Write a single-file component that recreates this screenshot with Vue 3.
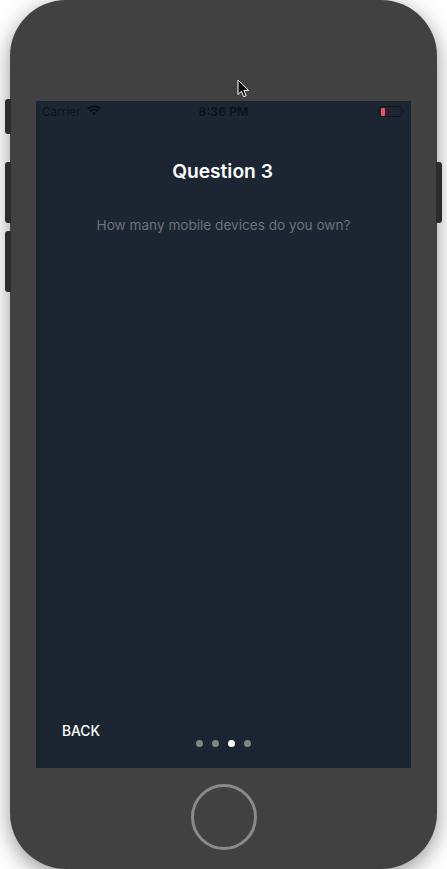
<script setup>
const dots = [false, false, true, false]
</script>

<template>
  <div class="stage">
    <div class="phone">
      <span class="side vol-mute"></span>
      <span class="side vol-up"></span>
      <span class="side vol-down"></span>
      <span class="side power"></span>

      <main class="screen">
        <header class="status">
          <div class="status-left">
            <span>Carrier</span>
            <svg class="wifi" viewBox="0 0 16 12" aria-hidden="true">
              <path d="M8 11.5 5.7 8.9a3.4 3.4 0 0 1 4.6 0Z" />
              <path d="M8 6a6 6 0 0 0-4.1 1.6L2.6 6.1A8 8 0 0 1 8 4a8 8 0 0 1 5.4 2.1l-1.3 1.5A6 6 0 0 0 8 6Z" />
              <path d="M8 2.2a9.9 9.9 0 0 0-6.7 2.6L0 3.3A11.8 11.8 0 0 1 8 .2a11.8 11.8 0 0 1 8 3.1l-1.3 1.5A9.9 9.9 0 0 0 8 2.2Z" />
            </svg>
          </div>
          <time class="clock">8:36 PM</time>
          <div class="battery">
            <span class="battery-body"><span class="battery-level"></span></span>
            <span class="battery-cap"></span>
          </div>
        </header>

        <section class="question">
          <h1>Question 3</h1>
          <p>How many mobile devices do you own?</p>
        </section>

        <footer class="footer">
          <button class="back">BACK</button>
          <div class="dots">
            <span v-for="(active, i) in dots" :key="i" class="dot" :class="{ active }"></span>
          </div>
        </footer>
      </main>

      <div class="home"></div>

      <svg class="cursor" viewBox="0 0 13 20" aria-hidden="true">
        <path d="M1 1v14.5l3.4-3.2 2.3 5.4 2.5-1.1-2.3-5.2h4.7Z" fill="#0c0c0c" stroke="#fff" stroke-width="1" />
      </svg>
    </div>
  </div>
</template>

<style scoped>
.stage {
  width: 447px;
  height: 869px;
  overflow: hidden;
  background: #fff;
  padding-left: 10px;
  box-sizing: border-box;
}
.phone {
  position: relative;
  width: 427px;
  height: 869px;
  box-sizing: border-box;
  padding: 101px 26px 0;
  border-radius: 56px;
  background: #414141;
  box-shadow: 0 6px 22px rgba(0, 0, 0, 0.42);
  display: flex;
  flex-direction: column;
  align-items: center;
  font-family: Inter, "Liberation Sans", sans-serif;
}
.side {
  position: absolute;
  width: 6px;
  background: #2c2c2c;
}
.vol-mute { left: -5px; top: 99px; height: 35px; border-radius: 3px 0 0 3px; }
.vol-up { left: -5px; top: 162px; height: 61px; border-radius: 3px 0 0 3px; }
.vol-down { left: -5px; top: 231px; height: 61px; border-radius: 3px 0 0 3px; }
.power { right: -5px; top: 162px; height: 61px; border-radius: 0 3px 3px 0; }
.screen {
  width: 375px;
  height: 667px;
  flex: none;
  background: #1b2632;
  display: flex;
  flex-direction: column;
}
.status {
  height: 20px;
  padding: 1px 7px 0 6px;
  box-sizing: border-box;
  display: grid;
  grid-template-columns: 1fr auto 1fr;
  align-items: center;
  color: #0c1219;
  font-size: 11.8px;
}
.status-left {
  display: flex;
  align-items: center;
  gap: 6px;
}
.wifi {
  width: 14px;
  height: 11px;
  fill: #080c12;
  margin-bottom: 2px;
}
.clock {
  font-size: 12.3px;
  font-weight: 600;
  margin-left: 1px;
}
.battery {
  justify-self: end;
  display: flex;
  align-items: center;
  gap: 1px;
}
.battery-body {
  width: 23px;
  height: 11px;
  box-sizing: border-box;
  padding: 0.5px;
  border: 1px solid #10161f;
  border-radius: 2.5px;
  display: flex;
}
.battery-level {
  width: 4px;
  border-radius: 1px;
  background: #f4505c;
}
.battery-cap {
  width: 1px;
  height: 3px;
  background: #10161f;
}
.question {
  text-align: center;
}
h1 {
  margin: 36px 2px 0 0;
  color: #fff;
  font-size: 19.2px;
  font-weight: 600;
  line-height: 28px;
}
p {
  margin: 30px 0 0;
  color: #6e7278;
  font-size: 13.6px;
  line-height: 20px;
}
.footer {
  margin-top: auto;
  padding: 0 0 21px 26px;
  display: flex;
  align-items: flex-start;
  gap: 96px;
}
.back {
  padding: 0;
  margin-top: -11px;
  border: 0;
  background: none;
  color: #fff;
  font: 500 13.8px/20px Inter, "Liberation Sans", sans-serif;
}
.dots {
  display: flex;
  gap: 9px;
  margin-top: 8px;
}
.dot {
  width: 7px;
  height: 7px;
  border-radius: 50%;
  background: #80858a;
}
.dot.active {
  background: #fff;
}
.home {
  width: 66px;
  height: 66px;
  margin-top: 16px;
  flex: none;
  box-sizing: border-box;
  border: 3px solid #8a8a8a;
  border-radius: 50%;
}
.cursor {
  position: absolute;
  left: 227px;
  top: 79px;
  width: 13px;
  height: 20px;
}
</style>
